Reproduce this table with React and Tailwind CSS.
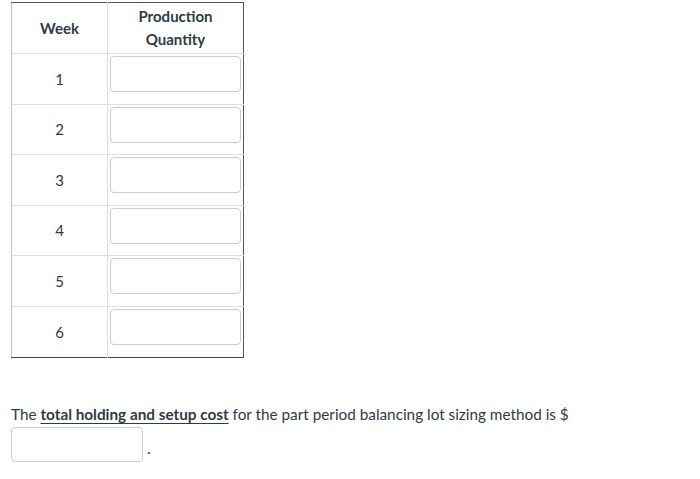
import React from 'react';

const weeks = [1, 2, 3, 4, 5, 6];

const App = () => {
  return (
    <div className="min-h-screen bg-white text-[#2d3b45] font-['Lato','Liberation_Sans',sans-serif]">
      <div className="pl-[11px] pt-[2px]">
        {/* Production table */}
        <table className="border-collapse border-t border-r border-b border-t-[#555] border-r-[#555] border-b-[#444] border-l border-l-[#c4c4c4]">
          <thead>
            <tr className="h-[51px]">
              <th className="w-[96px] border-r border-b border-[#ddd] text-[15px] font-bold leading-[23px] text-center align-middle">
                Week
              </th>
              <th className="w-[135px] border-b border-[#ddd] text-[15px] font-bold leading-[23px] text-center align-middle">
                Production
                <br />
                Quantity
              </th>
            </tr>
          </thead>
          <tbody>
            {weeks.map((w, i) => (
              <tr key={w} className="h-[50.6px]">
                <td className={`border-r border-[#ddd] text-center text-[15px] ${i < weeks.length - 1 ? 'border-b' : ''}`}>
                  {w}
                </td>
                <td className={`border-[#ddd] px-[2px] pt-[2px] align-top ${i < weeks.length - 1 ? 'border-b' : ''}`}>
                  <input
                    type="text"
                    className="block w-[131px] h-[36px] rounded-[4px] border border-[#c7cdd1] bg-white"
                  />
                </td>
              </tr>
            ))}
          </tbody>
        </table>

        {/* Question */}
        <p className="mt-[45px] text-[15.3px] leading-[22px]">
          The <span className="font-bold underline underline-offset-[3px]">total holding and setup cost</span> for the part period balancing lot sizing method is $
        </p>
        <div className="mt-[2px] flex items-end gap-[4px]">
          <input
            type="text"
            className="block w-[132px] h-[35px] rounded-[4px] border border-[#c7cdd1] bg-white"
          />
          <span className="text-[16px] leading-[22px] mb-[3px]">.</span>
        </div>
      </div>
    </div>
  );
};

export default App;
